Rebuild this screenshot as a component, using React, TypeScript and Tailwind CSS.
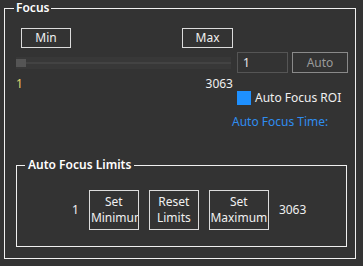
import React from 'react';

const font = { fontFamily: '"Noto Sans", "Open Sans", sans-serif' };

const FlatButton: React.FC<{ className?: string; children: React.ReactNode }> = ({ className = '', children }) => (
    <button className={`flex items-center justify-center border border-[#dcdcdc] bg-[#333333] text-[12px] leading-[16px] text-[#f0f0f0] ${className}`}>
        {children}
    </button>
);

const App: React.FC = () => {
    return (
        <div className="w-[363px] h-[266px] overflow-hidden bg-[#333333]" style={font}>
            <fieldset className="ml-[4px] w-[352px] h-[259px] border border-[#f0f0f0] p-0 m-0">
                <legend className="ml-[9px] px-[2px] text-[12px] leading-[16px] font-semibold text-white">Focus</legend>

                {/* Min / Max */}
                <div className="flex mt-[12px]">
                    <FlatButton className="ml-[16px] w-[50px] h-[20px]">Min</FlatButton>
                    <FlatButton className="ml-[111px] w-[51px] h-[20px]">Max</FlatButton>
                </div>

                {/* slider + value + auto */}
                <div className="flex items-center mt-[4px] h-[21px]">
                    <div className="relative ml-[11px] w-[215px] h-[12px] bg-[#383838]">
                        <div className="absolute left-0 right-0 top-[5px] h-[2px] bg-[#434343]" />
                        <div className="absolute left-0 top-[2px] w-[10px] h-[8px] bg-[#555555]" />
                    </div>
                    <div className="ml-[6px] w-[51px] h-[21px] border border-[#555555] flex items-center px-[5px] text-[12px] text-[#e8e8e8]">1</div>
                    <button className="ml-[4px] w-[56px] h-[21px] border border-[#8a8a8a] text-[12px] text-[#9a9a9a]">Auto</button>
                </div>

                {/* range labels */}
                <div className="flex justify-between ml-[11px] w-[217px] mt-[4px] text-[12px] leading-[14px]">
                    <span className="text-[#e2d36c]">1</span>
                    <span className="text-[#f0f0f0]">3063</span>
                </div>

                <div className="flex items-center ml-[232px] h-[14px] text-[12px] leading-[14px] text-[#f0f0f0]">
                    <span className="w-[14px] h-[14px] bg-[#1e90ff]" />
                    <span className="ml-[4px]">Auto Focus ROI</span>
                </div>

                <div className="ml-[227px] mt-[9px] text-[12px] leading-[16px] text-[#2f8df0]">Auto Focus Time:</div>

                <fieldset className="ml-[11px] mt-[27px] w-[331px] h-[90px] border border-[#f0f0f0] p-0">
                    <legend className="ml-[8px] px-[3px] text-[12px] leading-[16px] font-semibold text-white">Auto Focus Limits</legend>
                    <div className="flex items-center gap-[10px] ml-[55px] mt-[17px] text-[12px] text-[#f0f0f0]">
                        <span>1</span>
                        <FlatButton className="w-[50px] h-[40px] flex-col overflow-hidden whitespace-nowrap">
                            <span>Set</span>
                            <span className="self-start pl-[1px]">Minimum</span>
                        </FlatButton>
                        <FlatButton className="w-[50px] h-[40px] flex-col">
                            <span>Reset</span>
                            <span>Limits</span>
                        </FlatButton>
                        <FlatButton className="w-[60px] h-[40px] flex-col">
                            <span>Set</span>
                            <span>Maximum</span>
                        </FlatButton>
                        <span>3063</span>
                    </div>
                </fieldset>
            </fieldset>
        </div>
    );
};

export default App;
